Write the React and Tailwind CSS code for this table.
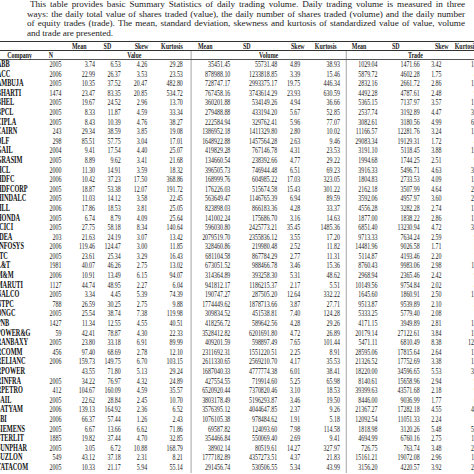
import React from "react";

const rows = [
  ["ABB", "2005", "3.74", "6.53", "4.26", "29.28", "35451.45", "55731.48", "4.89", "38.93", "1029.04", "1471.66", "3.42", "18.59"],
  ["ACC", "2006", "22.99", "26.37", "3.53", "23.53", "878988.10", "1233818.85", "3.39", "15.46", "5879.72", "4602.28", "1.75", "4.59"],
  ["AMBUJA", "2005", "10.35", "37.52", "20.47", "482.80", "728747.17", "2993375.17", "19.75", "446.34", "2832.16", "2661.72", "2.86", "13.35"],
  ["BHARTI", "1474", "23.47", "83.35", "20.85", "534.72", "767458.16", "3743614.29", "23.93", "630.59", "4492.28", "4787.61", "2.48", "9.54"],
  ["BHEL", "2005", "19.67", "24.52", "2.96", "13.70", "360201.88", "534149.26", "4.94", "36.66", "5365.15", "7137.97", "3.57", "17.54"],
  ["BPCL", "2005", "8.33", "11.87", "4.59", "33.34", "279488.88", "433194.20", "5.67", "52.85", "2537.74", "3192.89", "4.47", "33.83"],
  ["CIPLA", "2005", "8.43", "10.39", "4.76", "38.27", "222584.94", "329762.41", "5.96", "77.07", "3082.61", "3180.56", "4.99", "60.40"],
  ["CAIRN", "243", "29.34", "38.59", "3.85", "19.08", "1386952.18", "1411329.80", "2.80", "10.02", "11166.57", "12281.76", "3.24", "13.97"],
  ["DLF", "298", "85.51", "57.75", "3.04", "17.01", "1648922.88", "1457564.28", "2.63", "9.46", "29083.34", "19129.31", "1.72", "4.39"],
  ["GAIL", "2004", "9.41", "17.54", "4.40", "25.07", "419829.28", "767146.78", "4.31", "23.53", "3191.10", "5118.45", "3.88", "19.86"],
  ["GRASIM", "2005", "8.89", "9.62", "3.41", "21.68", "134660.54", "238392.66", "4.77", "29.22", "1994.68", "1744.25", "2.51", "9.64"],
  ["HCL", "2000", "11.30", "14.91", "3.59", "18.32", "396505.73", "746944.48", "6.51", "69.23", "3916.33", "5496.71", "4.63", "35.01"],
  ["HDFC", "2006", "10.42", "37.23", "17.50", "368.86", "168999.76", "604985.22", "17.03", "323.05", "1804.83", "2733.53", "4.09", "18.91"],
  ["HDFCORP", "2005", "18.87", "53.38", "12.07", "191.72", "176226.03", "515674.58", "15.43", "301.22", "2162.18", "3507.99", "4.64", "26.64"],
  ["HINDALC", "2005", "11.03", "14.12", "3.58", "22.45", "563649.47", "1146765.39", "6.94", "89.59", "3592.06", "4957.97", "3.60", "21.54"],
  ["HLL", "2006", "17.86", "18.53", "3.81", "25.05", "823898.03", "866183.36", "4.28", "33.37", "4556.28", "3282.28", "2.74", "15.23"],
  ["HONDA", "2005", "6.74", "8.79", "4.09", "25.64", "141002.24", "175686.70", "3.16", "14.63", "1877.00", "1838.22", "2.86", "13.23"],
  ["ICICI", "2005", "27.75", "58.18", "8.34", "140.64", "596030.80", "2425773.21", "35.45", "1485.36", "6851.40", "13230.94", "4.72", "31.83"],
  ["IDEA", "203", "21.63", "24.19", "3.07", "13.42", "2079519.70", "2355836.12", "3.55", "17.20", "9713.33", "7634.24", "2.59", "9.87"],
  ["INFOSYS", "2006", "119.46", "124.47", "3.00", "11.85", "328460.86", "219980.48", "2.52", "11.82", "14481.96", "9026.58", "1.71", "5.83"],
  ["ITC", "2005", "23.61", "25.34", "3.29", "16.43", "681104.58", "867784.29", "2.77", "11.31", "5114.87", "4193.46", "2.20", "7.79"],
  ["L&T", "1981", "40.07", "46.26", "2.75", "13.02", "673051.52", "988466.78", "3.46", "15.36", "8760.43", "9983.06", "2.98", "11.96"],
  ["M&M", "2006", "10.91", "13.49", "6.15", "94.07", "314364.89", "393258.30", "5.31", "48.62", "2968.94", "2365.46", "2.42", "9.54"],
  ["MARUTI", "1127", "44.74", "48.95", "2.27", "6.04", "941812.17", "1186215.37", "2.17", "5.51", "10149.56", "9754.84", "2.02", "4.31"],
  ["NALCO", "2005", "3.34", "4.45", "5.39", "74.39", "190747.27", "287505.20", "12.64", "332.22", "1645.60", "1860.91", "2.50", "12.83"],
  ["NTPC", "788", "26.59", "30.25", "2.75", "9.88", "1774449.62", "1878713.66", "3.87", "27.71", "9513.87", "9539.89", "2.10", "5.86"],
  ["ONGC", "2005", "25.54", "38.74", "7.38", "119.98", "309834.52", "451538.81", "7.40", "124.28", "5333.25", "5779.40", "2.08", "7.23"],
  ["PNB", "1427", "11.34", "12.55", "4.55", "40.51", "418256.72", "589642.56", "4.28", "29.26", "4171.15", "3949.89", "2.81", "14.06"],
  ["POWER&G", "59", "42.41", "78.87", "4.30", "22.33", "3528412.82", "6201691.80", "4.72", "26.89", "20179.14", "27122.61", "3.84", "18.66"],
  ["RANBAXY", "2005", "23.80", "33.18", "6.91", "89.99", "409201.59", "598897.49", "7.65", "101.44", "5471.11", "6810.49", "8.38", "125.45"],
  ["RCOMM", "456", "97.40", "68.69", "2.78", "12.10", "2311692.31", "1551220.51", "2.25", "8.91", "28595.06", "17815.64", "2.64", "17.29"],
  ["RELIANC", "2006", "159.73", "149.75", "6.70", "103.15", "2611330.65", "2569210.70", "4.17", "35.53", "21326.52", "17752.69", "3.38", "17.89"],
  ["RPOWER", "", "43.55", "71.80", "5.13", "29.24", "1687040.33", "4777774.38", "6.01", "38.41", "18220.00", "34596.65", "5.53", "33.01"],
  ["RINFRA", "2005", "34.22", "76.97", "4.32", "24.89", "427554.55", "719914.60", "5.25", "65.98", "8140.61", "15658.96", "2.94", "9.74"],
  ["RPETRO", "412", "104.67", "160.09", "4.59", "35.57", "6520920.44", "7370820.46", "3.10", "18.53", "39399.63", "43571.68", "2.18", "9.45"],
  ["SAIL", "2005", "22.62", "28.84", "2.45", "10.70", "3803178.49", "5196293.87", "3.46", "19.50", "8446.00", "9036.99", "1.77", "6.24"],
  ["SATYAM", "2006", "139.13", "164.92", "2.36", "6.52", "3576395.12", "4044647.85", "2.37", "9.26", "21367.27", "17282.18", "4.55", "49.86"],
  ["SBI", "2006", "66.37", "57.44", "1.26", "2.43", "1076105.38", "978484.62", "1.91", "5.18", "12092.54", "11051.33", "2.24", "7.31"],
  ["SIEMENS", "2005", "6.67", "13.66", "6.62", "71.86", "69587.82", "124093.60", "7.98", "114.58", "1818.98", "3120.26", "5.48", "53.96"],
  ["STERLIT", "1885", "19.82", "37.44", "4.70", "32.85", "354466.84", "550069.40", "2.69", "9.41", "4694.99", "6760.16", "2.75", "11.04"],
  ["SUNPHAR", "2005", "3.05", "6.72", "10.88", "168.79", "38902.14", "80519.61", "14.27", "327.97", "726.75", "763.74", "3.48", "24.06"],
  ["SUZLON", "549", "43.12", "37.18", "2.31", "8.21", "1777182.89", "4357273.51", "4.37", "21.83", "15161.21", "19072.08", "2.96", "11.54"],
  ["TATACOM", "2005", "10.33", "21.17", "5.94", "55.14", "291456.74", "530506.55", "5.34", "43.99", "3156.20", "4220.57", "3.92", "24.94"],
];

const grid =
  "grid grid-cols-[61px_32px_51px_39px_40px_67px_59px_71px_35px_70px_47px_64px_33px_65px]";

const heads = ["Mean", "SD", "Skew", "Kurtosis", "Mean", "SD", "Skew", "Kurtosis", "Mean", "SD", "Skew", "Kurtosis"];

const App = () => {
  return (
    <div className="w-[474px] h-[474px] overflow-hidden bg-white font-['Liberation_Serif',serif]">
      {/* caption */}
      <div className="ml-[27px] w-[438px] text-[9.2px] leading-[9.7px] tracking-[-0.05px] text-[#222]">
        <div className="text-justify [text-align-last:justify] pl-[3px]">
          This table provides basic Summary Statistics of daily trading volume. Daily trading volume is measured in three
        </div>
        <div className="text-justify [text-align-last:justify]">
          ways: the daily total value of shares traded (value), the daily number of shares traded (volume) and the daily number
        </div>
        <div className="text-justify [text-align-last:justify]">
          of equity trades (trade). The mean, standard deviation, skewness and kurtosis of standardized value of value, volume
        </div>
        <div>and trade are presented.</div>
      </div>

      <div className="mt-[2.2px] w-[734px] origin-top-left scale-x-[0.66] text-[#1a1a1a]">
        {/* header row 1 */}
        <div className="grid grid-cols-[109px_48px_47px_40px_56px_68px_73px_36px_56px_61px_65px_30px_45px] h-[10px] border-t border-b border-[#333] text-[9px] leading-[8px] font-bold">
          <div></div>
          {heads.map((h, i) => (
            <div key={i} className="whitespace-nowrap">
              {h}
            </div>
          ))}
        </div>
        {/* header row 2 */}
        <div className={`${grid} h-[9px] border-b border-[#555] text-[9px] leading-[8px] font-bold`}>
          <div className="pl-[11px]">Company</div>
          <div className="text-center">N</div>
          <div className="col-span-4 text-center pl-[25px] border-r border-[#777]">Value</div>
          <div className="col-span-4 text-center border-r border-[#777]">Volume</div>
          <div className="col-span-4 text-center">Trade</div>
        </div>
        {/* body */}
        {rows.map((r) => (
          <div key={r[0]} className={`${grid} h-[9.6px] text-[9px] leading-[9.6px]`}>
            <div className="-ml-[5px] font-bold text-[9.5px] text-[#111] whitespace-nowrap">{r[0]}</div>
            {r.slice(1).map((v, i) => (
              <div
                key={i}
                className={
                  "text-right whitespace-nowrap " +
                  (i === 4 ? "pr-[12px] border-r border-[#777] " : "") +
                  (i === 8 ? "pr-[9px] border-r border-[#777] " : "")
                }
              >
                {v}
              </div>
            ))}
          </div>
        ))}
      </div>
    </div>
  );
};

export default App;
